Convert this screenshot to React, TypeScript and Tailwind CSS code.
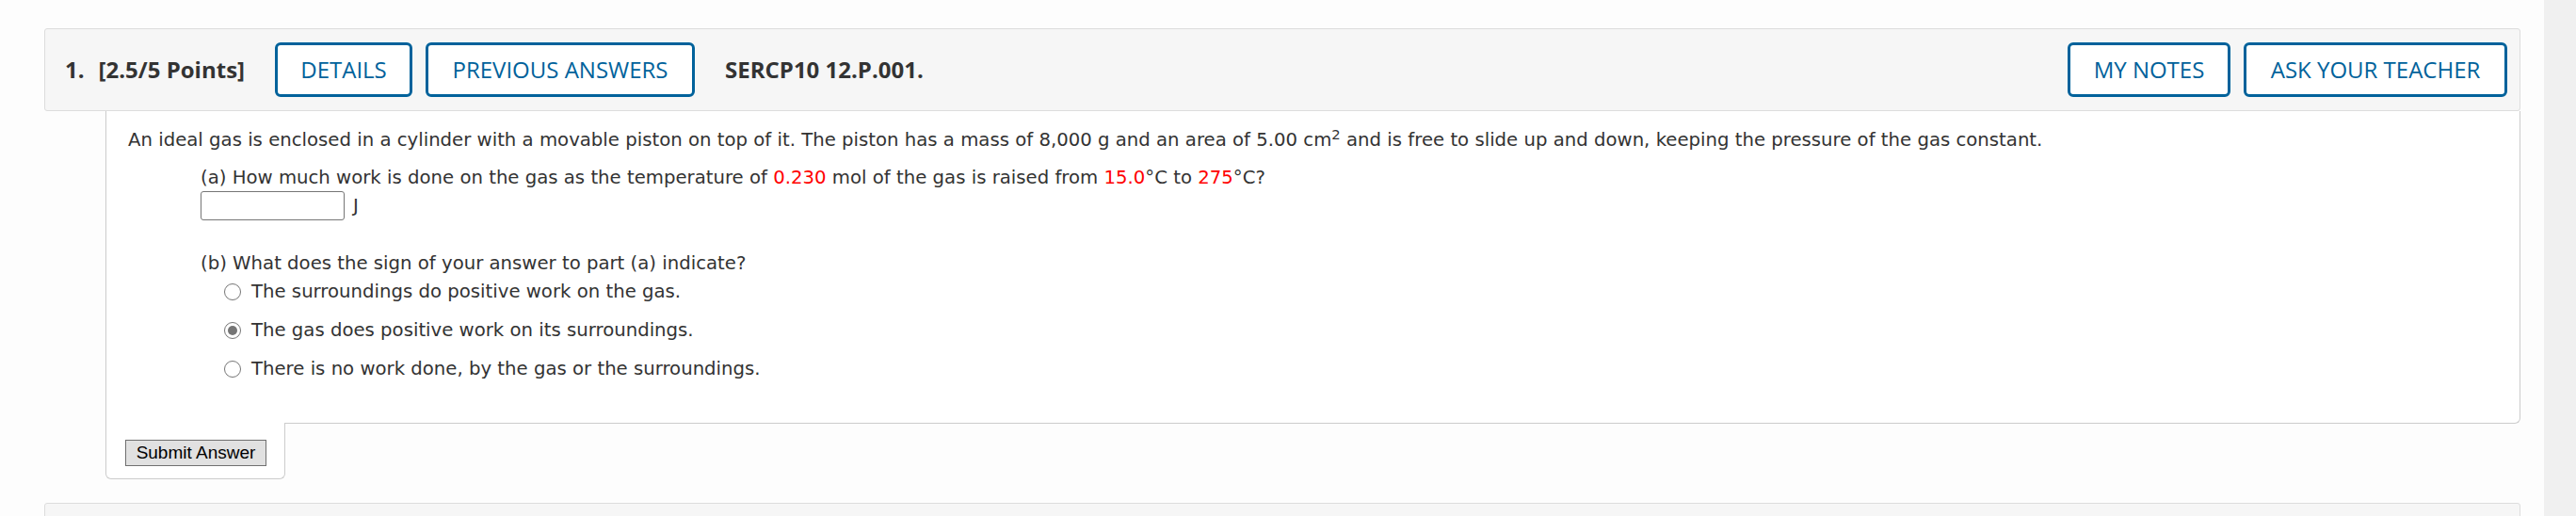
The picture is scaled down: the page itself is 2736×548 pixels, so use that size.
import React from "react";

const blueBtn =
  "flex items-center justify-center h-[58px] rounded-[6px] border-[3px] border-[#00629b] bg-white text-[#00629b] text-[24px] font-normal";

function Radio({ checked, label }: { checked?: boolean; label: string }) {
  return (
    <div className="flex items-center h-[29px]">
      <span className="flex items-center justify-center w-[18px] h-[18px] rounded-full border-[1.5px] border-[#767676] bg-white">
        {checked && <span className="block w-[10px] h-[10px] rounded-full bg-[#757575]" />}
      </span>
      <span className="ml-[11px]">{label}</span>
    </div>
  );
}

export default function App() {
  return (
    <div className="flex min-h-[548px] bg-[#fdfdfd] overflow-hidden">
      <div className="flex-1 pl-[47px] pr-[25px] pt-[30px] h-[548px] overflow-hidden">
        {/* question header */}
        <div
          className="flex items-center h-[88px] rounded-[3px] border border-[#dddddd] bg-[#f6f6f6] pl-[21px] pr-[13px] text-[#333333]"
          style={{ fontFamily: '"Open Sans", sans-serif' }}
        >
          <span className="text-[24px] font-bold">1.</span>
          <span className="text-[24px] font-bold ml-[15px]">[2.5/5 Points]</span>
          <button className={`${blueBtn} w-[146px] ml-[32px]`}>DETAILS</button>
          <button className={`${blueBtn} w-[286px] ml-[14px]`}>PREVIOUS ANSWERS</button>
          <span className="text-[24px] font-bold ml-[32px]">SERCP10 12.P.001.</span>
          <div className="flex-1" />
          <button className={`${blueBtn} w-[173px]`}>MY NOTES</button>
          <button className={`${blueBtn} w-[280px] ml-[14px]`}>ASK YOUR TEACHER</button>
        </div>

        {/* question body */}
        <div
          className="ml-[65px] text-[19.7px] leading-[29px] text-[#333333]"
          style={{ fontFamily: '"DejaVu Sans", Verdana, sans-serif' }}
        >
          <div className="border-l border-r border-b border-[#cccccc] rounded-br-[6px] bg-white pl-[23px] pt-[16px] pb-[43px]">
            <p>
              An ideal gas is enclosed in a cylinder with a movable piston on top of it. The piston
              has a mass of 8,000 g and an area of 5.00 cm<sup>2</sup> and is free to slide up and
              down, keeping the pressure of the gas constant.
            </p>
            <div className="ml-[77px]">
              <p className="mt-[11px]">
                (a) How much work is done on the gas as the temperature of{" "}
                <span className="text-[#ff0000]">0.230</span> mol of the gas is raised from{" "}
                <span className="text-[#ff0000]">15.0</span>°C to{" "}
                <span className="text-[#ff0000]">275</span>°C?
              </p>
              <div className="flex items-center">
                <input
                  type="text"
                  className="w-[153px] h-[31px] rounded-[3px] border border-[#767676] bg-white"
                />
                <span className="ml-[9px]">J</span>
              </div>
              <p className="mt-[31px]">(b) What does the sign of your answer to part (a) indicate?</p>
              <div className="ml-[25px] flex flex-col gap-[12px] mt-px">
                <Radio label="The surroundings do positive work on the gas." />
                <Radio checked label="The gas does positive work on its surroundings." />
                <Radio label="There is no work done, by the gas or the surroundings." />
              </div>
            </div>
          </div>
          <div className="relative -mt-px w-[191px] border-l border-r border-b border-[#cccccc] rounded-b-[6px] bg-white pl-[20px] pt-[17px] pb-[13px]">
            <button
              className="w-[150px] h-[28px] border border-[#707070] bg-[#e1e1e1] text-[19px] leading-none text-black"
              style={{ fontFamily: '"Liberation Sans", Arial, sans-serif' }}
            >
              Submit Answer
            </button>
          </div>
        </div>

        {/* next question header */}
        <div className="mt-[25px] h-[88px] rounded-t-[3px] border border-[#dddddd] bg-[#f6f6f6]" />
      </div>
      <div className="w-[34px] shrink-0 bg-[#f0f0f0]" />
    </div>
  );
}
